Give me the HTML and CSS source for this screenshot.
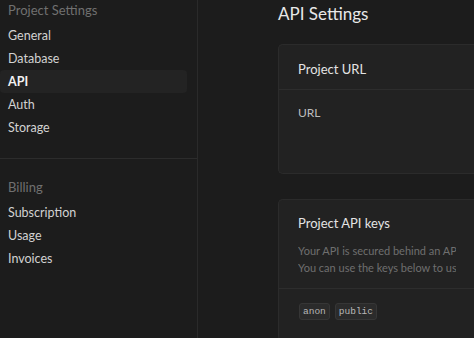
FILE: index.html
```html
<!DOCTYPE html>
<html lang="en">

<head>
  <meta charset="UTF-8">
  <meta name="viewport" content="width=device-width, initial-scale=1.0">
  <title>API Settings</title>
  <link rel="stylesheet" href="styles.css">
</head>

<body>
  <div class="layout">
    <nav class="sidebar">
      <section class="nav-group">
        <h4 class="nav-title">Project Settings</h4>
        <a class="nav-link">General</a>
        <a class="nav-link">Database</a>
        <a class="nav-link active">API</a>
        <a class="nav-link">Auth</a>
        <a class="nav-link">Storage</a>
      </section>
      <section class="nav-group billing">
        <h4 class="nav-title">Billing</h4>
        <a class="nav-link">Subscription</a>
        <a class="nav-link">Usage</a>
        <a class="nav-link">Invoices</a>
      </section>
    </nav>

    <main class="content">
      <h1 class="page-title">API Settings</h1>

      <div class="card">
        <div class="card-header">Project URL</div>
        <div class="card-body url-body">
          <label>URL</label>
        </div>
      </div>

      <div class="card">
        <div class="card-header keys-header">
          <div>Project API keys</div>
          <p class="desc">Your API is secured behind an API gateway which requires an API Key for every request.<br>You can use the keys below to use Supabase client libraries.</p>
        </div>
        <div class="card-body tags">
          <span class="tag">anon</span>
          <span class="tag">public</span>
        </div>
      </div>
    </main>
  </div>
</body>

</html>
```

FILE: styles.css
```css
html,
body {
  height: 100%;
  margin: 0;
}

body {
  background: #1c1c1c;
  color: #d6d6d6;
  font-family: Lato, "Noto Sans", sans-serif;
  overflow: hidden;
}

.layout {
  display: flex;
  height: 100%;
}

.sidebar {
  border-right: 1px solid #2a2a2a;
  flex: 0 0 197px;
  min-height: 338px;
}

.nav-group {
  display: flex;
  flex-direction: column;
  padding: 2px 10px 19px 0;
}

.billing {
  border-top: 1px solid #2c2c2c;
  padding-top: 20px;
}

.nav-title {
  color: #707070;
  font-size: 13px;
  font-weight: 400;
  line-height: 16px;
  margin: 0 0 6px 8px;
}

.nav-link {
  border-radius: 4px;
  color: #d2d2d2;
  font-size: 12.5px;
  line-height: 23px;
  padding-left: 8px;
}

.nav-link.active {
  background: #232323;
  color: #f2f2f2;
  font-weight: 700;
}

.content {
  background: #1c1c1c;
  flex: 1;
  min-width: 0;
  padding: 0 0 0 80px;
}

.page-title {
  color: #e8e8e8;
  font-size: 17px;
  font-weight: 400;
  line-height: 20px;
  margin: 4px 0 20px;
}

.card {
  background: #222;
  border: 1px solid #2b2b2b;
  border-radius: 5px 0 0 5px;
  border-right: none;
  margin-bottom: 25px;
}

.card-header {
  border-bottom: 1px solid #2d2d2d;
  color: #e4e4e4;
  font-size: 13px;
  line-height: 16px;
  padding: 16px 18px 12px 19px;
}

.card-body {
  padding: 15px 19px 20px;
}

.url-body {
  color: #bdbdbd;
  font-size: 12px;
  height: 48px;
  padding-top: 15px;
}

.keys-header {
  padding: 15px 18px 12px 19px;
}

.desc {
  color: #6f6f6f;
  font-size: 11px;
  line-height: 17px;
  margin: 11px 0 0;
  overflow: hidden;
  white-space: nowrap;
}

.tags {
  display: flex;
  gap: 5px;
  padding: 14px 19px 20px 20px;
}

.tag {
  background: #2b2b2b;
  border: 1px solid #363636;
  border-radius: 3px;
  color: #b8b8b8;
  font-family: "Liberation Mono", monospace;
  font-size: 9.5px;
  line-height: 13px;
  padding: 1px 3px;
}
```
